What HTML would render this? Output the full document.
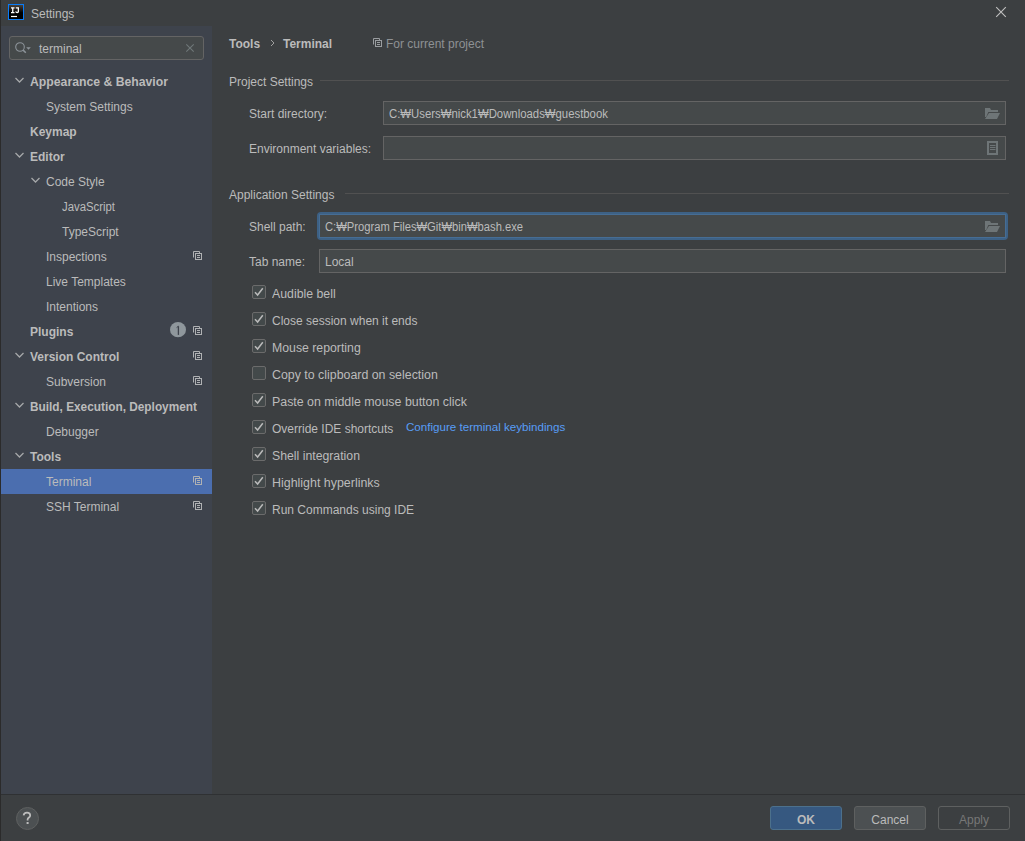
<!DOCTYPE html>
<html><head><meta charset="utf-8">
<style>
*{box-sizing:border-box;margin:0;padding:0}
html,body{width:1025px;height:841px;overflow:hidden;background:#3c3f41}
body{font-family:"Liberation Sans",sans-serif;font-size:12px;color:#bbbbbb;position:relative}
.a{position:absolute;white-space:pre}
.b{font-weight:bold}
.lbl{line-height:15px}
#lb{position:absolute;left:0;top:0;width:1px;height:841px;background:#2b2b2b}
#side{position:absolute;left:1px;top:26px;width:211px;height:768px;background:#3e434c}
.row{position:absolute;left:1px;width:211px;height:25px}
.sel{background:#4b6eaf}
.t{position:absolute;top:6px;line-height:15px;white-space:pre}
.field{position:absolute;background:#45494a;border:1px solid #646464}
.sep{position:absolute;height:1px;background:#515151}
.cb{position:absolute;left:252px;width:14px;height:14px;border:1px solid #6b6b6b;border-radius:2px;background:#43494a}
.btn{position:absolute;top:806px;width:72px;height:24px;border:1px solid #5e6060;border-radius:3px;background:#4c5052}
.btn span{position:absolute;left:0;right:0;top:6px;text-align:center;line-height:15px}
.path{transform-origin:0 0}
</style></head><body>
<div id="lb"></div>
<svg class="a" style="left:8px;top:4px" width="16" height="16" viewBox="0 0 16 16">
<defs><linearGradient id="g" x1="0" y1="0" x2="0" y2="1"><stop offset="0" stop-color="#4a423c"/><stop offset="0.55" stop-color="#000"/></linearGradient></defs>
<rect x="0" y="0" width="16" height="16" fill="#087cfa"/>
<rect x="1" y="1" width="14" height="14" fill="url(#g)"/>
<path d="M3 3.3H6.5V4.5H5.4V8H6.5V9.2H3V8H4.1V4.5H3Z" fill="#fff"/>
<path d="M7.8 3.3H11V7.6C11 8.7 10.3 9.2 9.2 9.2C8.1 9.2 7.4 8.6 7.2 7.6L8.3 7.3C8.4 7.8 8.7 8 9.1 8C9.5 8 9.7 7.8 9.7 7.3V4.5H7.8Z" fill="#fff"/>
<rect x="3" y="11.9" width="6" height="1.2" fill="#fff"/>
</svg>
<div class="a" style="left:31px;top:7px;line-height:15px">Settings</div>
<svg class="a" style="left:995px;top:6px" width="12" height="12" viewBox="0 0 12 12"><path d="M1.2 1.2L10.8 10.8M10.8 1.2L1.2 10.8" stroke="#c0c0c0" stroke-width="1.1"/></svg>

<div id="side"></div>
<div class="field" style="left:9px;top:36px;width:195px;height:24px;border-radius:3px"></div>
<svg class="a" style="left:13px;top:40px" width="20" height="16" viewBox="0 0 20 16">
<circle cx="7" cy="7" r="4.3" fill="none" stroke="#8c9399" stroke-width="1.1"/>
<path d="M10.1 10.1L12.8 12.8" stroke="#8c9399" stroke-width="1.5"/>
<path d="M13.2 7.2h4.6l-2.3 2.6z" fill="#8c9399"/>
</svg>
<div class="a lbl" style="left:39px;top:42px">terminal</div>
<svg class="a" style="left:184px;top:42px" width="12" height="12" viewBox="0 0 12 12"><path d="M2.3 2.3L9.7 9.7M9.7 2.3L2.3 9.7" stroke="#6f7879" stroke-width="1.1"/></svg>

<div class="row" style="top:69px"><svg class="a" style="left:13px;top:8px" width="11" height="7" viewBox="0 0 11 7"><path d="M1.5 1L5.5 5L9.5 1" fill="none" stroke="#a6a8aa" stroke-width="1.25"/></svg><div class="t b" style="left:29px;transform:scaleX(1.0192);transform-origin:0 0">Appearance &amp; Behavior</div></div>
<div class="row" style="top:94px"><div class="t" style="left:45px">System Settings</div></div>
<div class="row" style="top:119px"><div class="t b" style="left:29px">Keymap</div></div>
<div class="row" style="top:144px"><svg class="a" style="left:13px;top:8px" width="11" height="7" viewBox="0 0 11 7"><path d="M1.5 1L5.5 5L9.5 1" fill="none" stroke="#a6a8aa" stroke-width="1.25"/></svg><div class="t b" style="left:29px">Editor</div></div>
<div class="row" style="top:169px"><svg class="a" style="left:29px;top:8px" width="11" height="7" viewBox="0 0 11 7"><path d="M1.5 1L5.5 5L9.5 1" fill="none" stroke="#a6a8aa" stroke-width="1.25"/></svg><div class="t" style="left:45px">Code Style</div></div>
<div class="row" style="top:194px"><div class="t" style="left:61px;transform:scaleX(0.9464);transform-origin:0 0">JavaScript</div></div>
<div class="row" style="top:219px"><div class="t" style="left:61px">TypeScript</div></div>
<div class="row" style="top:244px"><div class="t" style="left:45px">Inspections</div><svg class="a" style="left:192px;top:7px" width="10" height="10" viewBox="0 0 10 10"><path d="M0.5 6.5V0.5H6.5V2" fill="none" stroke="#afb1b3"/><rect x="2.5" y="2.5" width="6" height="6" fill="none" stroke="#afb1b3"/><path d="M4 4.5h3M4 6.5h3" stroke="#afb1b3"/></svg></div>
<div class="row" style="top:269px"><div class="t" style="left:45px">Live Templates</div></div>
<div class="row" style="top:294px"><div class="t" style="left:45px">Intentions</div></div>
<div class="row" style="top:319px"><div class="t b" style="left:29px">Plugins</div><svg class="a" style="left:192px;top:7px" width="10" height="10" viewBox="0 0 10 10"><path d="M0.5 6.5V0.5H6.5V2" fill="none" stroke="#afb1b3"/><rect x="2.5" y="2.5" width="6" height="6" fill="none" stroke="#afb1b3"/><path d="M4 4.5h3M4 6.5h3" stroke="#afb1b3"/></svg><svg class="a" style="left:169px;top:3px" width="16" height="16" viewBox="0 0 16 16"><ellipse cx="8" cy="7.7" rx="8" ry="7.6" fill="#8f979c"/><path d="M8.4 4.2V12.9" stroke="#3e434c" stroke-width="1.3"/><path d="M8.4 4.2L6.6 5.6" stroke="#3e434c" stroke-width="1"/></svg></div>
<div class="row" style="top:344px"><svg class="a" style="left:13px;top:8px" width="11" height="7" viewBox="0 0 11 7"><path d="M1.5 1L5.5 5L9.5 1" fill="none" stroke="#a6a8aa" stroke-width="1.25"/></svg><div class="t b" style="left:29px">Version Control</div><svg class="a" style="left:192px;top:7px" width="10" height="10" viewBox="0 0 10 10"><path d="M0.5 6.5V0.5H6.5V2" fill="none" stroke="#afb1b3"/><rect x="2.5" y="2.5" width="6" height="6" fill="none" stroke="#afb1b3"/><path d="M4 4.5h3M4 6.5h3" stroke="#afb1b3"/></svg></div>
<div class="row" style="top:369px"><div class="t" style="left:45px">Subversion</div><svg class="a" style="left:192px;top:7px" width="10" height="10" viewBox="0 0 10 10"><path d="M0.5 6.5V0.5H6.5V2" fill="none" stroke="#afb1b3"/><rect x="2.5" y="2.5" width="6" height="6" fill="none" stroke="#afb1b3"/><path d="M4 4.5h3M4 6.5h3" stroke="#afb1b3"/></svg></div>
<div class="row" style="top:394px"><svg class="a" style="left:13px;top:8px" width="11" height="7" viewBox="0 0 11 7"><path d="M1.5 1L5.5 5L9.5 1" fill="none" stroke="#a6a8aa" stroke-width="1.25"/></svg><div class="t b" style="left:29px;transform:scaleX(0.9858);transform-origin:0 0">Build, Execution, Deployment</div></div>
<div class="row" style="top:419px"><div class="t" style="left:45px">Debugger</div></div>
<div class="row" style="top:444px"><svg class="a" style="left:13px;top:8px" width="11" height="7" viewBox="0 0 11 7"><path d="M1.5 1L5.5 5L9.5 1" fill="none" stroke="#a6a8aa" stroke-width="1.25"/></svg><div class="t b" style="left:29px">Tools</div></div>
<div class="row sel" style="top:469px"><div class="t" style="left:45px">Terminal</div><svg class="a" style="left:192px;top:7px" width="10" height="10" viewBox="0 0 10 10"><path d="M0.5 6.5V0.5H6.5V2" fill="none" stroke="#afb1b3"/><rect x="2.5" y="2.5" width="6" height="6" fill="none" stroke="#afb1b3"/><path d="M4 4.5h3M4 6.5h3" stroke="#afb1b3"/></svg></div>
<div class="row" style="top:494px"><div class="t" style="left:45px">SSH Terminal</div><svg class="a" style="left:192px;top:7px" width="10" height="10" viewBox="0 0 10 10"><path d="M0.5 6.5V0.5H6.5V2" fill="none" stroke="#afb1b3"/><rect x="2.5" y="2.5" width="6" height="6" fill="none" stroke="#afb1b3"/><path d="M4 4.5h3M4 6.5h3" stroke="#afb1b3"/></svg></div>

<div class="a lbl b" style="left:229px;top:37px">Tools</div>
<svg class="a" style="left:270px;top:39px" width="6" height="9" viewBox="0 0 6 9"><path d="M1 1L4 4L1 7" fill="none" stroke="#a0a0a0" stroke-width="1"/></svg>
<div class="a lbl b" style="left:283px;top:37px">Terminal</div>
<svg class="a" style="left:373px;top:38px" width="10" height="10" viewBox="0 0 10 10"><path d="M0.5 6.5V0.5H6.5V2" fill="none" stroke="#9a9da0"/><rect x="2.5" y="2.5" width="6" height="6" fill="none" stroke="#9a9da0"/><path d="M4 4.5h3M4 6.5h3" stroke="#9a9da0"/></svg>
<div class="a lbl" style="left:386px;top:37px;color:#8e9194">For current project</div>

<div class="a lbl" style="left:229px;top:75px">Project Settings</div>
<div class="sep" style="left:320px;top:80px;width:689px"></div>
<div class="a lbl" style="left:249px;top:107px">Start directory:</div>
<div class="field" style="left:383px;top:101px;width:623px;height:24px"></div>
<div class="a lbl path" style="left:389px;top:107px;transform:scaleX(0.946)">C:₩Users₩nick1₩Downloads₩guestbook</div>
<svg class="a" style="left:985px;top:108px" width="16" height="12" viewBox="0 0 16 12"><path d="M0 0H5L6 2H13V4H3.3L1.2 9H0Z" fill="#6e7577"/><path d="M4 5H15L12 11H0Z" fill="#6e7577"/></svg>
<div class="a lbl" style="left:249px;top:142px">Environment variables:</div>
<div class="field" style="left:383px;top:136px;width:623px;height:24px"></div>
<svg class="a" style="left:987px;top:141px" width="12" height="14" viewBox="0 0 12 14"><rect x="1" y="1" width="9" height="12" fill="none" stroke="#6e7577" stroke-width="2"/><path d="M3 4.5H8.5M3 6.5H8.5M3 8.5H8.5" stroke="#6e7577" stroke-width="1"/></svg>

<div class="a lbl" style="left:229px;top:188px">Application Settings</div>
<div class="sep" style="left:345px;top:193px;width:664px"></div>
<div class="a lbl" style="left:249px;top:220px">Shell path:</div>
<div class="a" style="left:317px;top:212px;width:691px;height:28px;border-radius:4px;background:#3d6185"></div>
<div class="field" style="left:319px;top:214px;width:687px;height:24px;border-color:#466d94"></div>
<div class="a lbl path" style="left:325px;top:220px;transform:scaleX(0.934)">C:₩Program Files₩Git₩bin₩bash.exe</div>
<svg class="a" style="left:985px;top:221px" width="16" height="12" viewBox="0 0 16 12"><path d="M0 0H5L6 2H13V4H3.3L1.2 9H0Z" fill="#6e7577"/><path d="M4 5H15L12 11H0Z" fill="#6e7577"/></svg>
<div class="a lbl" style="left:249px;top:255px">Tab name:</div>
<div class="field" style="left:319px;top:249px;width:687px;height:24px"></div>
<div class="a lbl" style="left:325px;top:255px">Local</div>

<div class="cb" style="top:285px"><svg class="a" style="left:-1px;top:-1px" width="14" height="14" viewBox="0 0 14 14"><path d="M3 7.3L5.6 10L10.8 3.3" fill="none" stroke="#bbbbbb" stroke-width="1.5"/></svg></div><div class="a lbl" style="left:272px;top:287px;transform:scaleX(1.0258);transform-origin:0 0">Audible bell</div>
<div class="cb" style="top:312px"><svg class="a" style="left:-1px;top:-1px" width="14" height="14" viewBox="0 0 14 14"><path d="M3 7.3L5.6 10L10.8 3.3" fill="none" stroke="#bbbbbb" stroke-width="1.5"/></svg></div><div class="a lbl" style="left:272px;top:314px">Close session when it ends</div>
<div class="cb" style="top:339px"><svg class="a" style="left:-1px;top:-1px" width="14" height="14" viewBox="0 0 14 14"><path d="M3 7.3L5.6 10L10.8 3.3" fill="none" stroke="#bbbbbb" stroke-width="1.5"/></svg></div><div class="a lbl" style="left:272px;top:341px;transform:scaleX(1.0231);transform-origin:0 0">Mouse reporting</div>
<div class="cb" style="top:366px"></div><div class="a lbl" style="left:272px;top:368px;transform:scaleX(1.0311);transform-origin:0 0">Copy to clipboard on selection</div>
<div class="cb" style="top:393px"><svg class="a" style="left:-1px;top:-1px" width="14" height="14" viewBox="0 0 14 14"><path d="M3 7.3L5.6 10L10.8 3.3" fill="none" stroke="#bbbbbb" stroke-width="1.5"/></svg></div><div class="a lbl" style="left:272px;top:395px;transform:scaleX(1.0323);transform-origin:0 0">Paste on middle mouse button click</div>
<div class="cb" style="top:420px"><svg class="a" style="left:-1px;top:-1px" width="14" height="14" viewBox="0 0 14 14"><path d="M3 7.3L5.6 10L10.8 3.3" fill="none" stroke="#bbbbbb" stroke-width="1.5"/></svg></div><div class="a lbl" style="left:272px;top:422px">Override IDE shortcuts</div><div class="a" style="left:406px;top:419px;line-height:15px;font-size:11.6px;color:#589df6">Configure terminal keybindings</div>
<div class="cb" style="top:447px"><svg class="a" style="left:-1px;top:-1px" width="14" height="14" viewBox="0 0 14 14"><path d="M3 7.3L5.6 10L10.8 3.3" fill="none" stroke="#bbbbbb" stroke-width="1.5"/></svg></div><div class="a lbl" style="left:272px;top:449px;transform:scaleX(1.0221);transform-origin:0 0">Shell integration</div>
<div class="cb" style="top:474px"><svg class="a" style="left:-1px;top:-1px" width="14" height="14" viewBox="0 0 14 14"><path d="M3 7.3L5.6 10L10.8 3.3" fill="none" stroke="#bbbbbb" stroke-width="1.5"/></svg></div><div class="a lbl" style="left:272px;top:476px;transform:scaleX(1.0355);transform-origin:0 0">Highlight hyperlinks</div>
<div class="cb" style="top:501px"><svg class="a" style="left:-1px;top:-1px" width="14" height="14" viewBox="0 0 14 14"><path d="M3 7.3L5.6 10L10.8 3.3" fill="none" stroke="#bbbbbb" stroke-width="1.5"/></svg></div><div class="a lbl" style="left:272px;top:503px">Run Commands using IDE</div>

<div class="sep" style="left:1px;top:794px;width:1024px;background:#2f3133"></div>
<div class="a" style="left:16px;top:807px;width:23px;height:23px;border-radius:50%;background:#4c5052;border:1px solid #5e6060"></div>
<svg class="a" style="left:21px;top:811px" width="14" height="15" viewBox="0 0 14 15"><path d="M2.6 4.4C2.8 2.6 4.2 1.6 6 1.6C7.9 1.6 9.2 2.8 9.2 4.4C9.2 6.4 6.6 6.6 6.6 8.6V9.6" fill="none" stroke="#bdbdbd" stroke-width="1.75"/><rect x="5.6" y="11" width="2" height="2" fill="#bdbdbd"/></svg>
<div class="btn" style="left:770px;background:#365880;border-color:#4c708c"><span class="b">OK</span></div>
<div class="btn" style="left:854px"><span>Cancel</span></div>
<div class="btn" style="left:938px;background:transparent;color:#777"><span>Apply</span></div>
</body></html>
